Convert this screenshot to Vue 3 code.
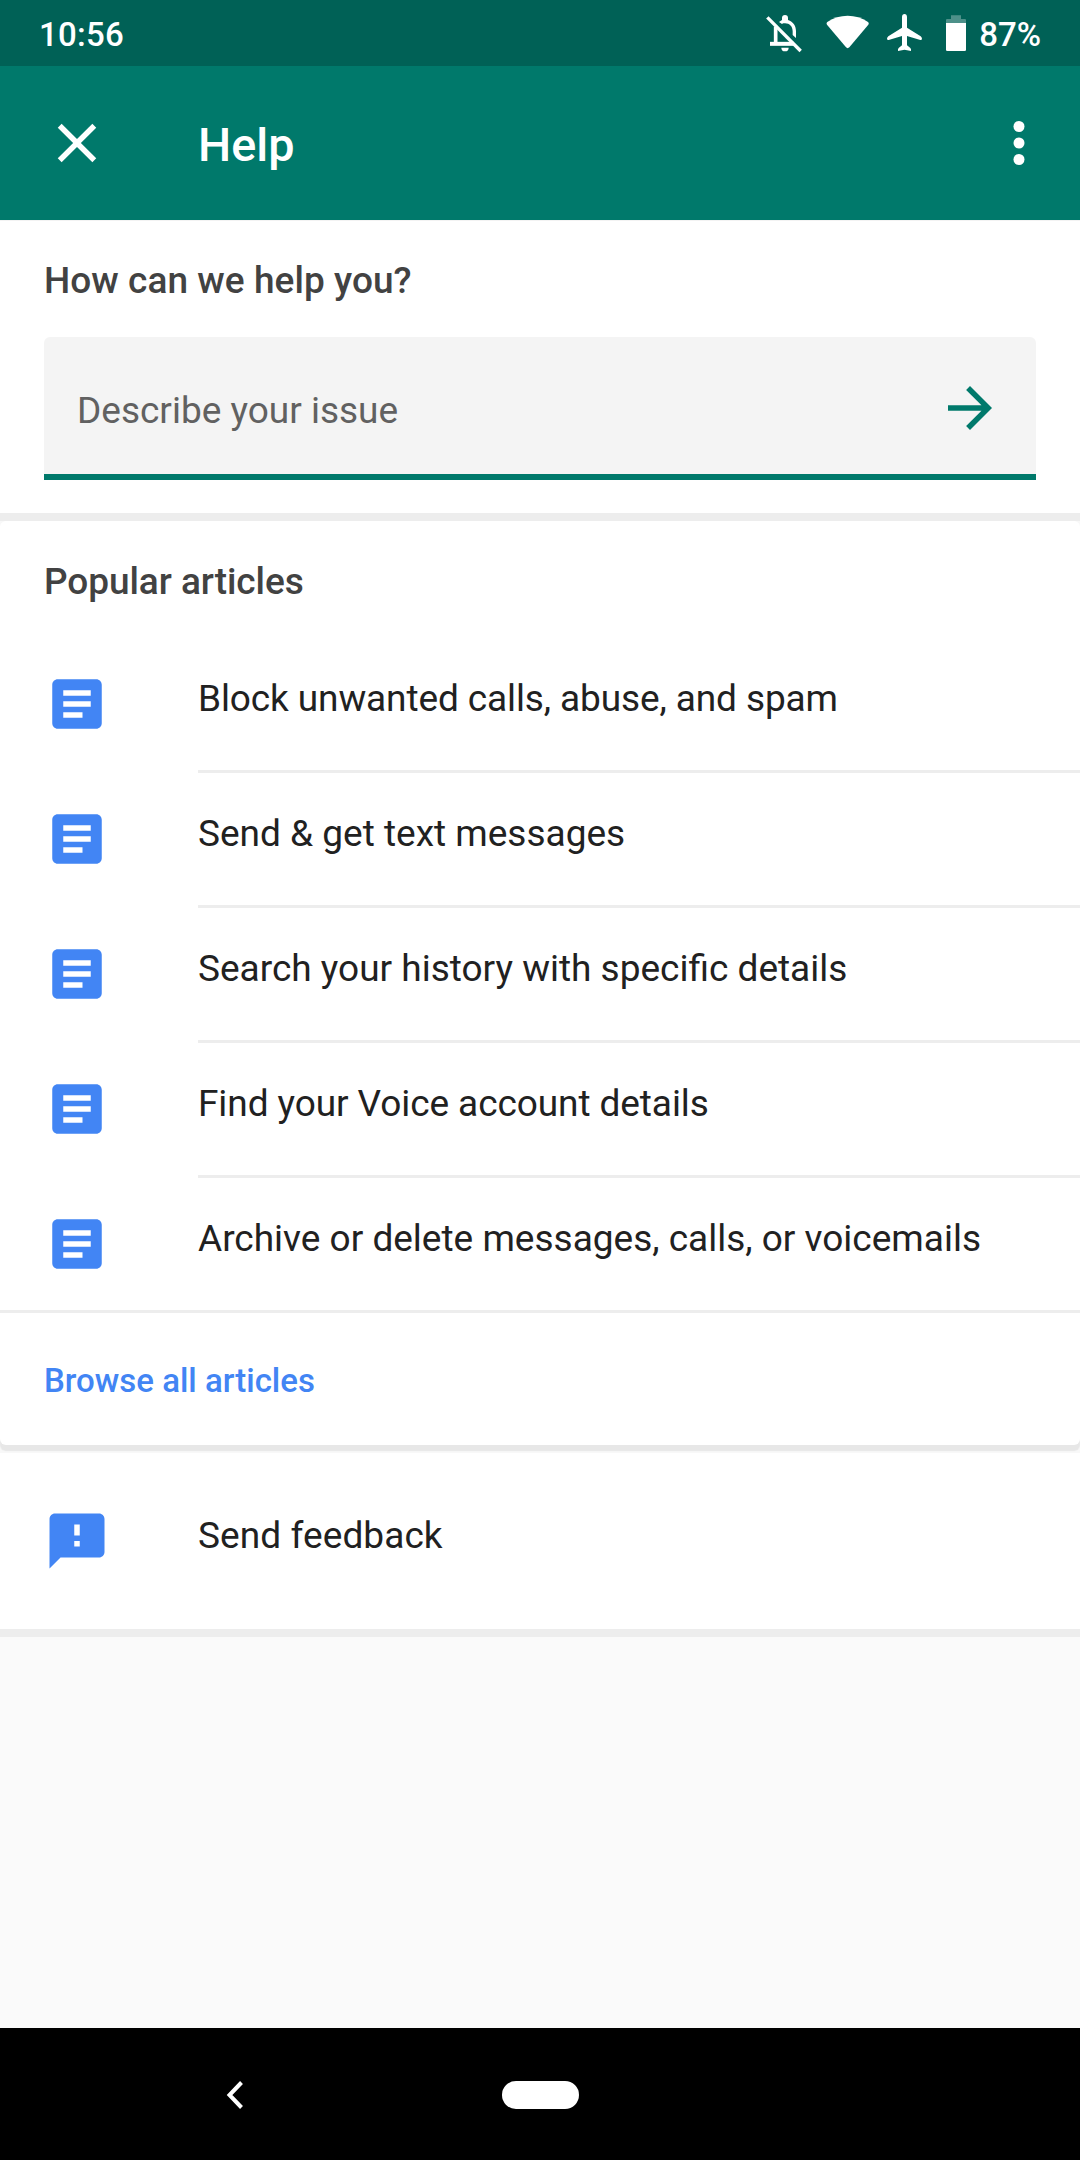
<script setup>
const articles = [
  { title: 'Block unwanted calls, abuse, and spam', tracking: -0.11 },
  { title: 'Send & get text messages', tracking: 0 },
  { title: 'Search your history with specific details', tracking: 0 },
  { title: 'Find your Voice account details', tracking: -0.08 },
  { title: 'Archive or delete messages, calls, or voicemails', tracking: 0 },
]
</script>

<template>
  <div class="screen">
    <header class="status">
      <span class="time">10:56</span>
      <div class="indicators">
        <svg class="bell" viewBox="75 42 114 117">
          <g fill="none" stroke="#fff">
            <path d="M107 80V128" stroke-width="11" />
            <path d="M90 131.5H162" stroke-width="12" />
            <path d="M82 52L182 153" stroke-width="10" />
          </g>
          <path fill="#fff" d="M117 66L126 60V54A9 9 0 0 1 144 54V60C160 65 168 78 168 94V114L158 105V94C158 79 149 70 135 70C131 70 129 70 126 72ZM124 143H146A11 11 0 0 1 124 143Z" />
        </svg>
        <svg class="wifi" viewBox="258 42 129 117">
          <path fill="#fff" d="M261 74Q258 70 262 66C280 53 301 47 323 47S366 53 384 66Q388 70 385 74L328 142Q323 147 318 142Z" />
        </svg>
        <svg class="plane" viewBox="438 42 111 117">
          <path fill="#fff" d="M493.500 42C489 42 486 46 486 51V83L445 109Q441 112 441 117Q442 121 446 120L486 108V136L476 144Q473 147 474 153L493.500 149L513 153Q514 147 511 144L501 136V108L541 120Q545 121 546 117Q546 112 542 109L501 83V51C501 46 498 42 493.500 42Z" />
        </svg>
        <svg class="battery" viewBox="618 42 60 117">
          <path fill="#fff" fill-opacity=".3" d="M633 46H663V57H675Q678 57 678 60V69H618V60Q618 57 621 57H633Z" />
          <path fill="#fff" d="M618 69H678V149Q678 153 674 153H622Q618 153 618 149Z" />
        </svg>
        <span class="percent">87%</span>
      </div>
    </header>

    <div class="appbar">
      <svg class="icon" viewBox="0 0 24 24"><path fill="#fff" d="M19 6.410 17.590 5 12 10.590 6.410 5 5 6.410 10.590 12 5 17.590 6.410 19 12 13.410 17.590 19 19 17.590 13.410 12z" /></svg>
      <h1>Help</h1>
      <svg class="icon" viewBox="0 0 24 24" fill="#fff"><circle cx="12" cy="6" r="2" /><circle cx="12" cy="12" r="2" /><circle cx="12" cy="18" r="2" /></svg>
    </div>

    <section class="ask">
      <h2>How can we help you?</h2>
      <div class="field">
        <span class="placeholder">Describe your issue</span>
        <svg class="icon" viewBox="0 0 24 24"><path fill="#00796b" d="m12 4-1.410 1.410L16.170 11H4v2h12.170l-5.580 5.590L12 20l8-8z" /></svg>
      </div>
    </section>

    <div class="backdrop">
      <section class="card">
        <h2>Popular articles</h2>
        <ul>
          <li v-for="article in articles" :key="article.title">
            <svg class="icon" viewBox="0 0 24 24"><path fill="#4285f4" d="M19 3H5c-1.100 0-2 .9-2 2v14c0 1.100.9 2 2 2h14c1.100 0 2-.9 2-2V5c0-1.100-.9-2-2-2zm-5 14H7v-2h7v2zm3-4H7v-2h10v2zm0-4H7V7h10v2z" /></svg>
            <div class="entry"><span :style="article.tracking ? { letterSpacing: article.tracking + 'px' } : null">{{ article.title }}</span></div>
          </li>
        </ul>
        <div class="browse">Browse all articles</div>
      </section>
    </div>

    <section class="feedback">
      <svg class="icon" viewBox="0 0 24 24"><path fill="#4285f4" d="M20 2H4c-1.100 0-1.990.9-1.990 2L2 22l4-4h14c1.100 0 2-.9 2-2V4c0-1.100-.9-2-2-2zm-7 12h-2v-2h2v2zm0-4h-2V6h2v4z" /></svg>
      <span>Send feedback</span>
    </section>

    <div class="rest"></div>

    <nav class="navbar">
      <svg class="back" viewBox="0 0 18 28"><path fill="none" stroke="#fff" stroke-width="4" d="M15.500 1.500 3.500 14l12 12.500" /></svg>
      <div class="pill"></div>
    </nav>
  </div>
</template>

<style>
body {
  margin: 0;
}
</style>

<style scoped>
.screen {
  width: 1080px;
  height: 2160px;
  display: flex;
  flex-direction: column;
  background: #fafafa;
  color: #212121;
  font-family: Roboto, "Liberation Sans", sans-serif;
  font-size: 37px;
  line-height: 44px;
  white-space: nowrap;
  overflow: hidden;
}
h1, h2, ul {
  margin: 0;
  padding: 0;
}
svg {
  display: block;
  flex: none;
}
.icon {
  width: 66px;
  height: 66px;
}
.status {
  box-sizing: border-box;
  height: 66px;
  padding: 0 39px;
  display: flex;
  justify-content: space-between;
  background: #006156;
  color: #fff;
  font-size: 33px;
  font-weight: 500;
}
.time,
.percent {
  line-height: 70px;
}
.time {
  letter-spacing: 0.25px;
}
.indicators {
  display: flex;
}
.indicators svg {
  height: 39px;
  margin-top: 14px;
}
.bell {
  width: 38px;
  margin-right: 23px;
}
.wifi {
  width: 43px;
  margin-right: 17px;
}
.plane {
  width: 37px;
  margin-right: 23px;
}
.battery {
  width: 20px;
  margin-right: 13px;
}
.appbar {
  box-sizing: border-box;
  height: 154px;
  padding: 0 28px 0 44px;
  display: flex;
  align-items: center;
  background: #00796b;
  color: #fff;
}
.appbar h1 {
  flex: 1;
  margin-left: 88px;
  padding-top: 4px;
  font-size: 46.75px;
  line-height: 56px;
  font-weight: 500;
}
h2 {
  font-size: 37px;
  font-weight: 500;
  line-height: 44px;
  color: #424242;
}
.ask {
  box-sizing: border-box;
  height: 293px;
  padding: 38px 44px 0;
  background: #fff;
  border-top: 1px solid #f3f3f3;
}
.ask h2 {
  letter-spacing: 0.05px;
}
.field {
  box-sizing: border-box;
  height: 143px;
  margin-top: 34px;
  padding: 0 33px;
  display: flex;
  align-items: center;
  justify-content: space-between;
  border-radius: 6px 6px 0 0;
  background: #f4f4f4;
  box-shadow: inset 0 -6px #00796b;
}
.field .icon {
  margin-bottom: 1px;
}
.placeholder {
  padding-top: 5px;
  color: #616161;
}
.backdrop {
  box-sizing: border-box;
  height: 940px;
  border-top: 8px solid #ededed;
  background: #f8f8f8;
}
.card {
  height: 924px;
  border-radius: 6px;
  background: #fff;
  box-shadow: 0 6px 1px #e7e7e7;
}
.card h2 {
  height: 76px;
  padding: 39px 44px 0;
  letter-spacing: -0.06px;
}
ul {
  list-style: none;
  padding-top: 2px;
}
li {
  height: 135px;
  display: flex;
  align-items: center;
  padding-left: 44px;
}
li .icon {
  margin-bottom: 3px;
}
.entry {
  flex: 1;
  box-sizing: border-box;
  height: 135px;
  margin-left: 88px;
  padding-top: 39px;
  border-bottom: 3px solid #ededed;
}
li:last-child {
  padding-left: 0;
  border-bottom: 3px solid #ededed;
  height: 132px;
}
li:last-child .icon {
  margin: 0 0 0 44px;
}
li:last-child .entry {
  height: 132px;
  border: 0;
}
.browse {
  padding: 46px 44px 0;
  font-size: 33px;
  font-weight: 500;
  color: #4285f4;
}
.feedback {
  box-sizing: border-box;
  height: 184px;
  padding: 0 44px;
  display: flex;
  align-items: center;
  gap: 88px;
  border-bottom: 8px solid #ededed;
  background: #fff;
}
.feedback span {
  padding-bottom: 11px;
  letter-spacing: 0.08px;
}
.rest {
  flex: 1;
}
.navbar {
  height: 132px;
  display: flex;
  align-items: center;
  background: #000;
}
.back {
  width: 18px;
  height: 28px;
  margin: 1px 258px 0 226px;
}
.pill {
  width: 77px;
  height: 28px;
  margin-top: 1px;
  border-radius: 14px;
  background: #fff;
}
</style>
